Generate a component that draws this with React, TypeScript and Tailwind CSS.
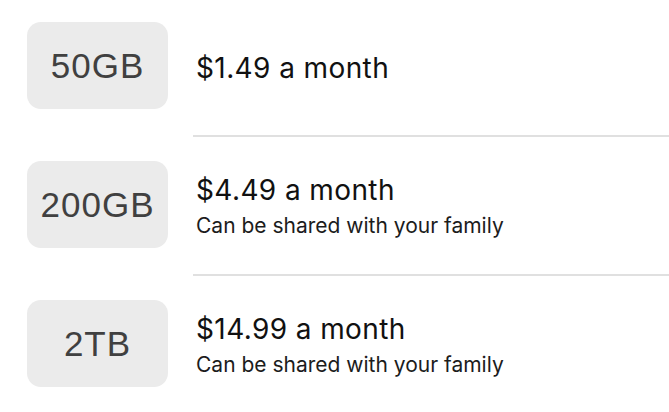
import React from "react"

type Plan = {
  size: string
  price: string
  note?: string
}

const plans: Plan[] = [
  { size: "50GB", price: "$1.49 a month" },
  { size: "200GB", price: "$4.49 a month", note: "Can be shared with your family" },
  { size: "2TB", price: "$14.99 a month", note: "Can be shared with your family" },
]

function PlanRow({ plan }: { plan: Plan }) {
  return (
    <div className="flex items-center pl-[27px]">
      <div className="flex h-[87px] w-[141px] shrink-0 items-center justify-center rounded-[14px] bg-[#ebebeb]">
        <span className="font-['Liberation_Sans',sans-serif] text-[35px] leading-none tracking-[1px] text-[#404040]">
          {plan.size}
        </span>
      </div>
      <div className="ml-[28px] flex flex-col pt-[4px]">
        <span className="text-[28px] leading-[30px] tracking-[0.4px] text-[#111]">{plan.price}</span>
        {plan.note && (
          <span className="mt-[8px] text-[21px] leading-[26px] text-[#1c1c1c]">{plan.note}</span>
        )}
      </div>
    </div>
  )
}

export default function App() {
  return (
    <div
      className="h-[412px] w-[669px] overflow-hidden bg-white"
      style={{ fontFamily: "Inter, 'Liberation Sans', sans-serif" }}
    >
      <div className="pt-[22px]">
        {plans.map((plan, i) => (
          <div key={plan.size}>
            {i > 0 && <div className="ml-[193px] mb-[24px] mt-[26px] h-[2px] bg-[#e0e0e0]" />}
            <PlanRow plan={plan} />
          </div>
        ))}
      </div>
    </div>
  )
}
